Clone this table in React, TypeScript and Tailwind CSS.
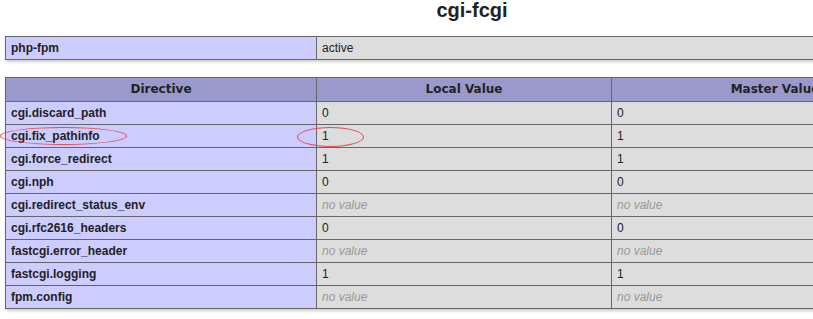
import React from 'react';

type Row = { name: string; local: string | null; master: string | null };

const rows: Row[] = [
  { name: 'cgi.discard_path', local: '0', master: '0' },
  { name: 'cgi.fix_pathinfo', local: '1', master: '1' },
  { name: 'cgi.force_redirect', local: '1', master: '1' },
  { name: 'cgi.nph', local: '0', master: '0' },
  { name: 'cgi.redirect_status_env', local: null, master: null },
  { name: 'cgi.rfc2616_headers', local: '0', master: '0' },
  { name: 'fastcgi.error_header', local: null, master: null },
  { name: 'fastcgi.logging', local: '1', master: '1' },
  { name: 'fpm.config', local: null, master: null },
];

const cell = 'border border-[#666] px-[5px] py-[4px] text-[12px] leading-[14px] align-baseline';
const head = "font-['DejaVu_Sans',Verdana,sans-serif] font-bold";

const Value = ({ v }: { v: string | null }) =>
  v === null ? <i className="text-[#999]">no value</i> : <>{v}</>;

export default function App() {
  return (
    <div className="w-full h-[319px] overflow-hidden bg-white text-[#222] font-['Liberation_Sans',Arial,sans-serif]">
      <div className="relative w-[944px]">
        <h2 className="text-center text-[20px] leading-[23px] font-bold mt-[-1px]">cgi-fcgi</h2>

        <table className="ml-[5px] mt-[14px] w-[934px] border-collapse shadow-[1px_2px_3px_#ccc]">
          <tbody>
            <tr>
              <td className={`${cell} w-[311px] bg-[#ccf] font-bold`}>php-fpm</td>
              <td className={`${cell} bg-[#ddd]`}>active</td>
            </tr>
          </tbody>
        </table>

        <table className="ml-[5px] mt-[17px] w-[934px] border-collapse shadow-[1px_2px_3px_#ccc]">
          <thead>
            <tr className="bg-[#99c]">
              <th className={`${cell} ${head} w-[311px] h-[24px]`}>Directive</th>
              <th className={`${cell} ${head} w-[295px]`}>Local Value</th>
              <th className={`${cell} ${head}`}>Master Value</th>
            </tr>
          </thead>
          <tbody>
            {rows.map(r => (
              <tr key={r.name}>
                <td className={`${cell} bg-[#ccf] font-bold`}>{r.name}</td>
                <td className={`${cell} bg-[#ddd]`}><Value v={r.local} /></td>
                <td className={`${cell} bg-[#ddd]`}><Value v={r.master} /></td>
              </tr>
            ))}
          </tbody>
        </table>

        {/* hand-drawn annotations */}
        <div className="absolute left-0 top-[128px] w-[127px] h-[18px] rounded-[50%] border border-[#e8484e]" />
        <div className="absolute left-[297px] top-[128px] w-[67px] h-[20px] rounded-[50%] border border-[#e8484e]" />
      </div>
    </div>
  );
}
